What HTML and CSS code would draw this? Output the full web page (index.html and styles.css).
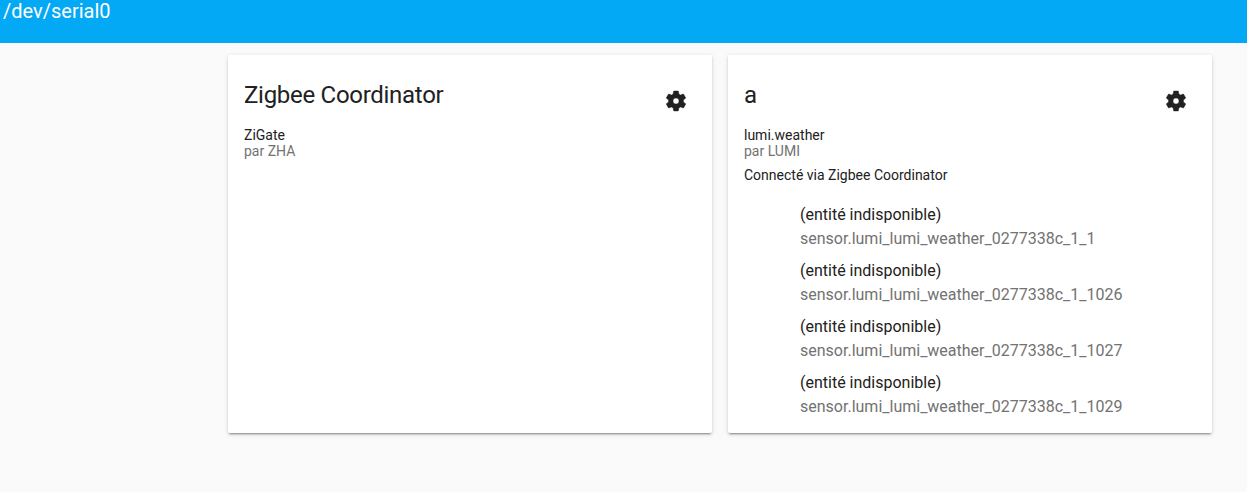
FILE: index.html
```html
<!DOCTYPE html>
<html lang="fr">
<head>
    <meta charset="UTF-8">
    <meta name="viewport" content="width=device-width, initial-scale=1.0">
    <title>/dev/serial0</title>
    <link rel="stylesheet" href="styles.css">
</head>
<body>
    <header class="top-bar">/dev/serial0</header>

    <div class="content">
        <div class="card">
            <div class="card-header">
                <h2 class="card-title">Zigbee Coordinator</h2>
                <svg class="gear" viewBox="0 0 24 24"><path d="M12,15A3,3 0 0,1 9,12A3,3 0 0,1 12,9A3,3 0 0,1 15,12A3,3 0 0,1 12,15M19.43,12.97C19.47,12.65 19.5,12.33 19.5,12C19.5,11.67 19.47,11.34 19.43,11L21.54,9.37C21.73,9.22 21.78,8.95 21.66,8.73L19.66,5.27C19.54,5.05 19.27,4.96 19.05,5.05L16.56,6.05C16.04,5.66 15.5,5.32 14.87,5.07L14.5,2.42C14.46,2.18 14.25,2 14,2H10C9.75,2 9.54,2.18 9.5,2.42L9.13,5.07C8.5,5.32 7.96,5.66 7.44,6.05L4.95,5.05C4.73,4.96 4.46,5.05 4.34,5.27L2.34,8.73C2.21,8.95 2.27,9.22 2.46,9.37L4.57,11C4.53,11.34 4.5,11.67 4.5,12C4.5,12.33 4.53,12.65 4.57,12.97L2.46,14.63C2.27,14.78 2.21,15.05 2.34,15.27L4.34,18.73C4.46,18.95 4.73,19.03 4.95,18.95L7.44,17.94C7.96,18.34 8.5,18.68 9.13,18.93L9.5,21.58C9.54,21.82 9.75,22 10,22H14C14.25,22 14.46,21.82 14.5,21.58L14.87,18.93C15.5,18.67 16.04,18.34 16.56,17.94L19.05,18.95C19.27,19.03 19.54,18.95 19.66,18.73L21.66,15.27C21.78,15.05 21.73,14.78 21.54,14.63L19.43,12.97Z"/></svg>
            </div>
            <div class="model">ZiGate</div>
            <div class="maker">par ZHA</div>
        </div>

        <div class="card">
            <div class="card-header">
                <h2 class="card-title">a</h2>
                <svg class="gear" viewBox="0 0 24 24"><path d="M12,15A3,3 0 0,1 9,12A3,3 0 0,1 12,9A3,3 0 0,1 15,12A3,3 0 0,1 12,15M19.43,12.97C19.47,12.65 19.5,12.33 19.5,12C19.5,11.67 19.47,11.34 19.43,11L21.54,9.37C21.73,9.22 21.78,8.95 21.66,8.73L19.66,5.27C19.54,5.05 19.27,4.96 19.05,5.05L16.56,6.05C16.04,5.66 15.5,5.32 14.87,5.07L14.5,2.42C14.46,2.18 14.25,2 14,2H10C9.75,2 9.54,2.18 9.5,2.42L9.13,5.07C8.5,5.32 7.96,5.66 7.44,6.05L4.95,5.05C4.73,4.96 4.46,5.05 4.34,5.27L2.34,8.73C2.21,8.95 2.27,9.22 2.46,9.37L4.57,11C4.53,11.34 4.5,11.67 4.5,12C4.5,12.33 4.53,12.65 4.57,12.97L2.46,14.63C2.27,14.78 2.21,15.05 2.34,15.27L4.34,18.73C4.46,18.95 4.73,19.03 4.95,18.95L7.44,17.94C7.96,18.34 8.5,18.68 9.13,18.93L9.5,21.58C9.54,21.82 9.75,22 10,22H14C14.25,22 14.46,21.82 14.5,21.58L14.87,18.93C15.5,18.67 16.04,18.34 16.56,17.94L19.05,18.95C19.27,19.03 19.54,18.95 19.66,18.73L21.66,15.27C21.78,15.05 21.73,14.78 21.54,14.63L19.43,12.97Z"/></svg>
            </div>
            <div class="model">lumi.weather</div>
            <div class="maker">par LUMI</div>
            <div class="via">Connecté via Zigbee Coordinator</div>
            <div class="entities">
                <div class="entity">
                    <div class="entity-name">(entité indisponible)</div>
                    <div class="entity-id">sensor.lumi_lumi_weather_0277338c_1_1</div>
                </div>
                <div class="entity">
                    <div class="entity-name">(entité indisponible)</div>
                    <div class="entity-id">sensor.lumi_lumi_weather_0277338c_1_1026</div>
                </div>
                <div class="entity">
                    <div class="entity-name">(entité indisponible)</div>
                    <div class="entity-id">sensor.lumi_lumi_weather_0277338c_1_1027</div>
                </div>
                <div class="entity">
                    <div class="entity-name">(entité indisponible)</div>
                    <div class="entity-id">sensor.lumi_lumi_weather_0277338c_1_1029</div>
                </div>
            </div>
        </div>
    </div>
</body>
</html>
```

FILE: styles.css
```css
html, body {
    height: 100%;
    margin: 0;
    padding: 0;
    overflow: hidden;
    font-family: Roboto, sans-serif;
    background-color: #fafafa;
    color: #212121;
}

.top-bar {
    height: 43px;
    padding-left: 3px;
    box-sizing: border-box;
    background-color: #03a9f4;
    color: #fff;
    font-size: 20px;
    line-height: 23px;
}

.content {
    display: flex;
    gap: 16px;
    padding: 12px 35px 0 228px;
}

.card {
    flex: 1;
    height: 378px;
    padding: 0 16px;
    box-sizing: border-box;
    background-color: #fff;
    border-radius: 2px;
    box-shadow: 0 2px 2px 0 rgba(0, 0, 0, 0.14), 0 1px 5px 0 rgba(0, 0, 0, 0.12), 0 3px 1px -2px rgba(0, 0, 0, 0.2);
}

.card-header {
    display: flex;
    justify-content: space-between;
    height: 72px;
}

.card-title {
    margin: 0;
    padding-top: 24px;
    font-size: 24px;
    font-weight: 400;
    line-height: 32px;
    letter-spacing: -0.012em;
    color: #212121;
}

.gear {
    width: 24px;
    height: 24px;
    margin: 34px 8px 0 0;
    fill: #212121;
    stroke: #212121;
    stroke-width: 0.4;
}

.model, .maker {
    font-size: 14px;
    line-height: 16px;
}

.maker {
    color: #727272;
}

.via {
    margin-top: 8px;
    font-size: 14px;
    line-height: 16px;
}

.entities {
    margin-top: 16px;
    padding-left: 56px;
}

.entity {
    height: 56px;
}

.entity-name {
    padding-top: 4px;
    font-size: 16px;
    line-height: 24px;
}

.entity-id {
    font-size: 16px;
    line-height: 24px;
    color: #727272;
}
```
